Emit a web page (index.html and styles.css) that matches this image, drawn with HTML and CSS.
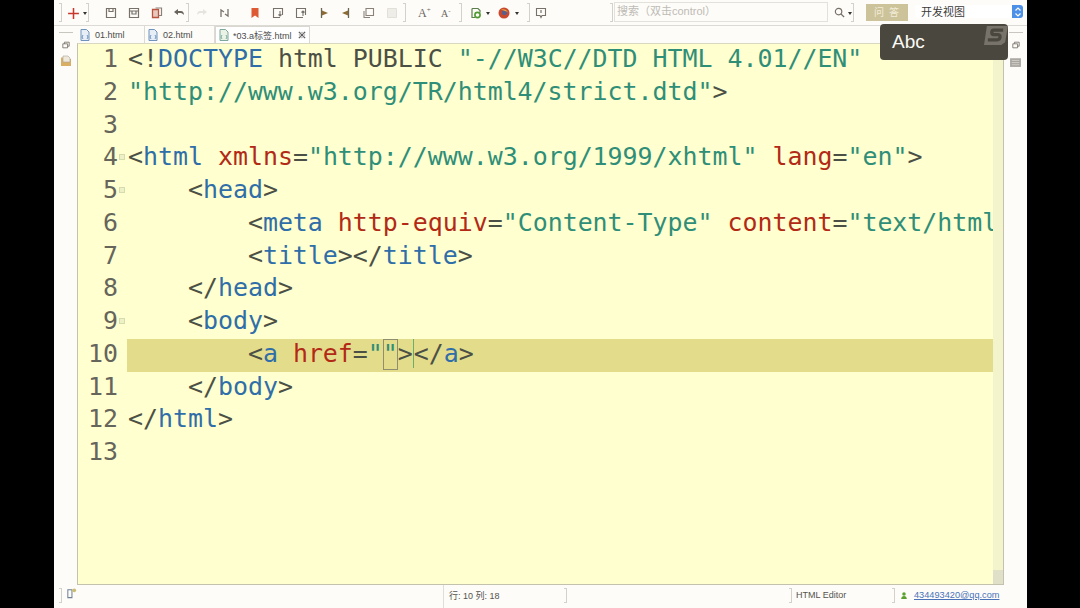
FILE: index.html
```html
<!DOCTYPE html>
<html lang="zh">
<head>
<meta charset="utf-8">
<title>HBuilder</title>
<link rel="stylesheet" href="styles.css">
</head>
<body>
<div class="app">
  <header class="toolbar">
    <span class="sep first"></span>
    <svg class="ic plus" viewBox="0 0 12 12"><path d="M6 1v10M1 6h10" stroke="#c9362c" stroke-width="1.400"/></svg>
    <span class="caret"></span>
    <span class="sep s1"></span>
    <svg class="ic i1" viewBox="0 0 12 12"><path d="M1.500 1.500h9v9h-9zM4 1.500v3h4v-3" fill="none" stroke="#77716a" stroke-width="1.200"/></svg>
    <svg class="ic i2" viewBox="0 0 12 12"><path d="M1.500 1.500h9v9h-9zM1.500 4h9M4 4v3h4V4" fill="none" stroke="#77716a" stroke-width="1.200"/></svg>
    <svg class="ic i3" viewBox="0 0 12 12"><path d="M1.500 2.500h6v8h-6z" fill="#e9c8bd" stroke="#b9553f" stroke-width="1.300"/><path d="M4.500 1h6v7.500h-3" fill="none" stroke="#8a8178" stroke-width="1.200"/></svg>
    <svg class="ic i4" viewBox="0 0 12 12"><path d="M1 5l4-3v2h3c2 0 3 2 3 4-1-1-2-2-3-2H5v2z" fill="#69645c"/></svg>
    <svg class="ic i5" viewBox="0 0 12 12"><path d="M11 5L7 2v2H4C2 4 1 6 1 8c1-1 2-2 3-2h3v2z" fill="#e6e4de"/></svg>
    <svg class="ic i6" viewBox="0 0 12 12"><path d="M2 10V3l3 2M9 2v7L6 7" fill="none" stroke="#77716a" stroke-width="1.300"/></svg>
    <span class="sep s2"></span>
    <svg class="ic i7" viewBox="0 0 12 12"><path d="M2.500 1h7v10L6 8.500 2.500 11z" fill="#dd5a35"/></svg>
    <svg class="ic i8" viewBox="0 0 12 12"><path d="M8 10.500H1.500v-9h9V8M8 4v5M6.500 7.500L8 9l1.500-1.500" fill="none" stroke="#77716a" stroke-width="1.100"/></svg>
    <svg class="ic i9" viewBox="0 0 12 12"><path d="M8 10.500H1.500v-9h9V8M8 9V4M6.500 5.500L8 4l1.500 1.500" fill="none" stroke="#77716a" stroke-width="1.100"/></svg>
    <svg class="ic i10" viewBox="0 0 12 12"><path d="M3.500 1v10" stroke="#6d664f" stroke-width="1.300"/><path d="M4 3.500L10 6 4 8.500z" fill="#8a6a35"/></svg>
    <svg class="ic i11" viewBox="0 0 12 12"><path d="M8.500 1v10" stroke="#6d664f" stroke-width="1.300"/><path d="M8 3.500L2 6l6 2.500z" fill="#8a6a35"/></svg>
    <svg class="ic i12" viewBox="0 0 12 12"><path d="M3 1.500h7.500v7H3zM1 4v6.500h6" fill="none" stroke="#8a8178" stroke-width="1.100"/></svg>
    <svg class="ic i13" viewBox="0 0 12 12"><path d="M1.500 1.500h9v9h-9z" fill="#efede7" stroke="#e3e0d9"/></svg>
    <span class="sep s3"></span>
    <span class="tfont big">A<sup>+</sup></span>
    <span class="tfont small">A<sup>-</sup></span>
    <span class="sep s4"></span>
    <svg class="ic i14" viewBox="0 0 12 12"><path d="M2 1.500h6l2 2v2M2 1.500v9h3" fill="none" stroke="#5d7f4c" stroke-width="1.200"/><circle cx="7.500" cy="8" r="2.600" fill="none" stroke="#4f9a30" stroke-width="1.600"/></svg>
    <span class="caret c2"></span>
    <svg class="ic i15" viewBox="0 0 12 12"><circle cx="6" cy="6" r="5.500" fill="#c84a2e"/><circle cx="6.500" cy="5.500" r="2.600" fill="#5b5f8c"/><path d="M3 2.500c3-1 6 0 7 3-1-1-2-1.500-3-1.500z" fill="#eda23a"/></svg>
    <span class="caret c3"></span>
    <span class="sep s5"></span>
    <svg class="ic i16" viewBox="0 0 12 12"><path d="M1.500 1.500h9v7H7L6 10.500 5 8.500H1.500z" fill="none" stroke="#77716a" stroke-width="1.100"/><path d="M6 3v3" stroke="#77716a" stroke-width="1.200"/></svg>
    <span class="sep s6"></span>
    <div class="search">搜索（双击control）</div>
    <svg class="ic i17" viewBox="0 0 12 12"><circle cx="5" cy="5" r="3.500" fill="none" stroke="#77716a" stroke-width="1.300"/><path d="M7.500 7.500L11 11" stroke="#77716a" stroke-width="1.500"/></svg>
    <span class="caret c4"></span>
    <span class="sep s7"></span>
    <button class="ask">问 答</button>
    <div class="viewsel"><span>开发视图</span><i class="spin"><svg viewBox="0 0 8 12"><path d="M1.500 4.500L4 2l2.500 2.500M1.500 7.500L4 10l2.500-2.500" fill="none" stroke="#fff" stroke-width="1.200"/></svg></i></div>
  </header>
  <div class="middle">
    <aside class="side left">
      <span class="rule"></span>
      <svg class="sic" viewBox="0 0 10 10"><path d="M1 3.500h6v5H1zM3 3.500V1.500h6v5H7" fill="none" stroke="#6d675f" stroke-width="1"/></svg>
      <svg class="sic files" viewBox="0 0 12 12"><path d="M1 2.500h6l1 1.500h3v7H1z" fill="#d9b063"/><path d="M3 1h5l2 2v4H3z" fill="#efe9dc" stroke="#a8a196" stroke-width=".6"/></svg>
    </aside>
    <main class="center">
      <nav class="tabs">
        <div class="tab t1"><svg class="fic" viewBox="0 0 10 12"><path d="M1 .5h5.500L9 3v8.500H1z" fill="#e8eef6" stroke="#6f93bd"/><path d="M3 6L2 8l1 2M7 6l1 2-1 2" fill="none" stroke="#4f7cb4" stroke-width=".8"/></svg>01.html</div>
        <div class="tab t2"><svg class="fic" viewBox="0 0 10 12"><path d="M1 .5h5.500L9 3v8.500H1z" fill="#e8eef6" stroke="#6f93bd"/><path d="M3 6L2 8l1 2M7 6l1 2-1 2" fill="none" stroke="#4f7cb4" stroke-width=".8"/></svg>02.html</div>
        <div class="tab active"><svg class="fic" viewBox="0 0 10 12"><path d="M1 .5h5.500L9 3v8.500H1z" fill="#eaf3e6" stroke="#7da89a"/><path d="M3 6L2 8l1 2M7 6l1 2-1 2" fill="none" stroke="#5c9a8a" stroke-width=".8"/></svg>*03.a标签.html<svg class="close" viewBox="0 0 9 9"><path d="M1 1l7 7M8 1L1 8" stroke="#5f5f5f" stroke-width="1.500"/><path d="M1 4.500L4.500 1 8 4.500 4.500 8z" fill="none" stroke="#8a8a8a" stroke-width=".6"/></svg></div>
      </nav>
      <section class="editor">
        <div class="code">
          <div class="ln"><b>1</b><code><i class="p">&lt;!</i><i class="t">DOCTYPE</i> <i class="p">html PUBLIC</i> <i class="s">"-//W3C//DTD HTML 4.01//EN"</i></code></div>
          <div class="ln"><b>2</b><code><i class="s">"http://www.w3.org/TR/html4/strict.dtd"</i><i class="p">&gt;</i></code></div>
          <div class="ln"><b>3</b><code></code></div>
          <div class="ln"><b>4</b><u class="fold"></u><code><i class="p">&lt;</i><i class="t">html</i> <i class="a">xmlns</i><i class="p">=</i><i class="s">"http://www.w3.org/1999/xhtml"</i> <i class="a">lang</i><i class="p">=</i><i class="s">"en"</i><i class="p">&gt;</i></code></div>
          <div class="ln"><b>5</b><u class="fold"></u><code>    <i class="p">&lt;</i><i class="t">head</i><i class="p">&gt;</i></code></div>
          <div class="ln"><b>6</b><code>        <i class="p">&lt;</i><i class="t">meta</i> <i class="a">http-equiv</i><i class="p">=</i><i class="s">"Content-Type"</i> <i class="a">content</i><i class="p">=</i><i class="s">"text/html</i></code></div>
          <div class="ln"><b>7</b><code>        <i class="p">&lt;</i><i class="t">title</i><i class="p">&gt;&lt;/</i><i class="t">title</i><i class="p">&gt;</i></code></div>
          <div class="ln"><b>8</b><code>    <i class="p">&lt;/</i><i class="t">head</i><i class="p">&gt;</i></code></div>
          <div class="ln"><b>9</b><u class="fold"></u><code>    <i class="p">&lt;</i><i class="t">body</i><i class="p">&gt;</i></code></div>
          <div class="ln cur"><b>10</b><code>        <i class="p">&lt;</i><i class="t">a</i> <i class="a">href</i><i class="p">=</i><i class="s">"<em class="box">"</em></i><i class="p caret-after">&gt;</i><i class="p">&lt;/</i><i class="t">a</i><i class="p">&gt;</i></code></div>
          <div class="ln"><b>11</b><code>    <i class="p">&lt;/</i><i class="t">body</i><i class="p">&gt;</i></code></div>
          <div class="ln"><b>12</b><code><i class="p">&lt;/</i><i class="t">html</i><i class="p">&gt;</i></code></div>
          <div class="ln"><b>13</b><code></code></div>
        </div>
        <div class="scrollbar"><span class="thumb top"></span><span class="thumb bot"></span></div>
      </section>
    </main>
    <aside class="side right">
      <div class="rpanel">
        <span class="rule"></span>
        <svg class="sic" viewBox="0 0 10 10"><path d="M1 3.500h6v5H1zM3 3.500V1.500h6v5H7" fill="none" stroke="#6d675f" stroke-width="1"/></svg>
        <svg class="sic kb" viewBox="0 0 12 12"><path d="M1 3h10v8H1z" fill="#a9a6a0"/><path d="M2.500 5h7M2.500 7h7M2.500 9h7" stroke="#d4d2cc" stroke-width=".8"/></svg>
      </div>
    </aside>
  </div>
  <footer class="status">
    <span class="sep b0"></span>
    <svg class="ic trash" viewBox="0 0 12 12"><path d="M2 2h4.500v8.500H2z" fill="none" stroke="#6f7f96" stroke-width="1.100"/><circle cx="9" cy="2.500" r="2" fill="#c9bd6f"/></svg>
    <div class="pos">行: 10 列: 18</div>
    <span class="sep b1"></span>
    <span class="sep b2"></span>
    <span class="mode">HTML Editor</span>
    <span class="sep b3"></span>
    <svg class="ic user" viewBox="0 0 10 10"><circle cx="5" cy="3" r="2.200" fill="#5aa02c"/><path d="M1.500 9.500c0-3 1.500-4 3.500-4s3.500 1 3.500 4z" fill="#5aa02c"/></svg>
    <a class="mail" href="#">434493420@qq.com</a>
  </footer>
  <div class="hud">Abc<svg class="logo" viewBox="0 0 26 24"><path d="M4 2h22l-3 17-4 3H1z" fill="#77736a"/><path d="M21 6.500h-10c-2.500 0-2.500 4.500 0 4.500h5c2.500 0 2.500 5.500-1 5.500H5" fill="none" stroke="#4a473f" stroke-width="3.400"/></svg></div>
</div>
</body>
</html>
```
FILE: styles.css
```css
* { box-sizing: border-box; }
html, body { margin: 0; height: 100%; background: #000; overflow: hidden; }
body { display: flex; justify-content: center; padding-left: 1px; font-family: "Liberation Sans", "Noto Sans CJK SC", sans-serif; }
.app { position: relative; width: 973px; height: 608px; background: #fdfcf8; display: flex; flex-direction: column; }

.toolbar { position: relative; height: 26px; flex: none; border-bottom: 1px solid #dcdad4; }
.toolbar > * { position: absolute; }
.ic { width: 12px; height: 12px; top: 7px; }
.sep { width: 3px; border: 1px solid #d4d1ca; border-left: 0; background: transparent; }
.toolbar .sep { top: 3px; height: 19px; }
.first { left: 5px; }
.s1 { left: 32px; } .s2 { left: 132px; } .s3 { left: 349px; } .s4 { left: 405px; } .s5 { left: 473px; }
.s6 { left: 556px; } .s7 { left: 797px; }
.plus { left: 13px; width: 13px; height: 13px; }
.caret { top: 12px; width: 0; height: 0; border: 2.500px solid transparent; border-top: 3px solid #333; border-bottom: 0; left: 29px; }
.toolbar .c2 { left: 432px; } .toolbar .c3 { left: 461px; } .toolbar .c4 { left: 794px; }
.i1 { left: 51px; } .i2 { left: 74px; } .i3 { left: 97px; } .i4 { left: 119px; } .i5 { left: 142px; } .i6 { left: 165px; }
.i7 { left: 195px; } .i8 { left: 218px; } .i9 { left: 241px; } .i10 { left: 264px; } .i11 { left: 286px; } .i12 { left: 309px; } .i13 { left: 332px; }
.tfont { top: 6px; color: #6a6560; font-family: "Liberation Serif", serif; line-height: 14px; }
.tfont sup { font-size: 7px; line-height: 0; }
.big { left: 364px; font-size: 12px; }
.small { left: 387px; font-size: 10px; top: 7px; }
.i14 { left: 416px; } .i15 { left: 444px; } .i16 { left: 481px; }
.search { left: 560px; top: 2px; width: 214px; height: 20px; background: #fdfcf8; border: 1px solid #e3e1db; color: #bdbbb6; font-size: 11px; line-height: 17px; padding-left: 2px; white-space: nowrap; }
.i17 { left: 780px; width: 11px; height: 11px; top: 7px; }
.ask { left: 812px; top: 4px; width: 42px; height: 17px; padding: 0; background: #cdc39a; border: 0; color: #f2ecd9; font: 10px/17px "Liberation Sans", "Noto Sans CJK SC", sans-serif; letter-spacing: 1px; }
.viewsel { left: 861px; top: 5px; width: 108px; height: 13px; background: #fff; border-radius: 3px; color: #3d3b38; font-size: 11px; line-height: 14px; padding-left: 6px; }
.spin { position: absolute; right: 0; top: 0; width: 11px; height: 13px; background: #4d90e8; border-radius: 0 3px 3px 0; display: flex; align-items: center; justify-content: center; }
.spin svg { width: 8px; height: 12px; }

.middle { flex: 1; display: flex; min-height: 0; }
.side { flex: none; width: 23px; display: flex; flex-direction: column; align-items: center; padding-top: 6px; }
.rpanel { display: flex; flex-direction: column; align-items: center; width: 19px; }
.rule { width: 14px; height: 1px; background: #c9c6bf; margin-bottom: 8px; }
.sic { width: 8px; height: 8px; margin-bottom: 6px; }
.files { width: 12px; height: 12px; }
.kb { width: 13px; height: 13px; }

.center { flex: 1; min-width: 0; display: flex; flex-direction: column; }
.tabs { height: 17px; flex: none; display: flex; font-size: 9px; color: #4b4b4b; }
.tab { display: flex; align-items: center; height: 17px; border-right: 1px solid #dcdad4; white-space: nowrap; }
.t1 { width: 68px; padding-left: 3px; }
.t2 { width: 70px; padding-left: 3px; }
.active { width: 95px; padding-left: 3px; background: #fff; border: 1px solid #d9d7d0; border-bottom: 0; }
.fic { width: 10px; height: 12px; margin-right: 5px; flex: none; }
.active .fic { margin-right: 4px; }
.close { width: 8px; height: 8px; margin-left: 6px; }

.editor { flex: 1; min-height: 0; display: flex; background: #ffffcf; border: 1px solid #c3c2ad; border-top: 1px solid #d9d8c0; overflow: hidden; }
.code { flex: 1; min-width: 0; overflow: hidden; font: 24.900px/29px "DejaVu Sans Mono", monospace; }
.ln { position: relative; display: flex; height: 32.760px; white-space: pre; }
.ln b { flex: none; width: 40px; text-align: right; font-weight: 400; color: #66655c; }
.ln code { font: inherit; margin-left: 9px; padding-left: 1px; flex: 1; min-width: 0; overflow: hidden; }
.ln i { font-style: normal; }
.p { color: #4b5046; } .t { color: #2f6ea8; } .a { color: #b22a16; } .s { color: #2f8e78; }
.cur code { background: #e3dc8b; }
.box { font-style: normal; display: inline-block; width: 14.990px; height: 31px; vertical-align: top; outline: 1px solid #8f8e6e; outline-offset: -1px; }
.caret-after { border-right: 1px solid #69b06b; }
.fold { position: absolute; left: 41px; top: 12px; width: 6px; height: 6px; background: #eef0c6; border: 1px solid #d5dcae; }
.scrollbar { flex: none; width: 10px; background: #f4f4cc; display: flex; flex-direction: column; justify-content: space-between; }
.thumb { display: block; height: 14px; background: #e0e0c8; }

.status { position: relative; height: 23px; flex: none; font-size: 9px; color: #55534f; }
.status > * { position: absolute; }
.status .sep { top: 3px; height: 15px; }
.b0 { left: 5px; } .b1 { left: 510px; } .b2 { left: 735px; } .b3 { left: 838px; }
.trash { left: 12px; top: 3px; width: 11px; height: 11px; }
.pos { left: 389px; top: 0; height: 23px; line-height: 22px; border-left: 1px solid #e0ded8; padding-left: 5px; }
.mode { left: 742px; top: 4px; line-height: 12px; }
.user { left: 846px; top: 6px; width: 8px; height: 9px; }
.mail { left: 860px; top: 4px; line-height: 12px; color: #4a72b8; font-size: 9.200px; }

.hud { position: absolute; left: 826px; top: 24px; width: 128px; height: 36px; background: #4a473f; border-radius: 4px; color: #fbfaf5; font-size: 19px; line-height: 36px; padding-left: 12px; }
.logo { position: absolute; right: 0; top: 0; width: 25px; height: 23px; }
```
